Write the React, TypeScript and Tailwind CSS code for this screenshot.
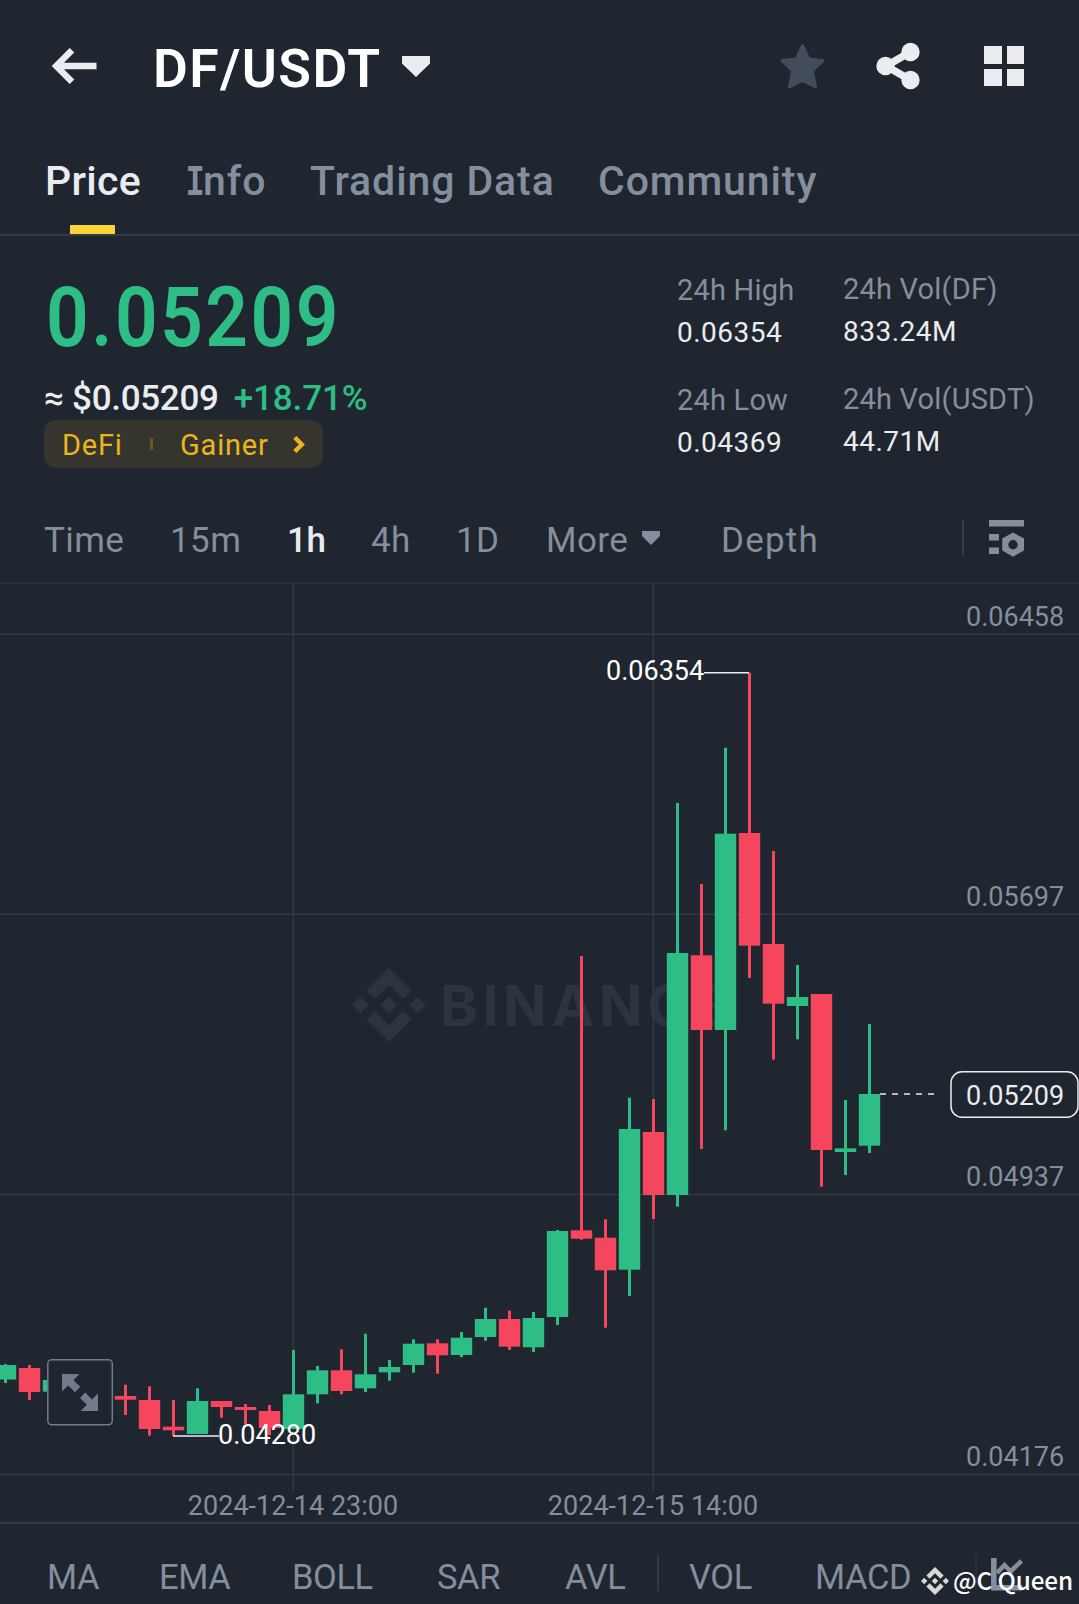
import clsx from "clsx";

const UP = "#2ebd85";
const DOWN = "#f6465d";

const tabs = [
  { label: "Price", width: "w-[142px]", active: true },
  { label: "Info", width: "w-[123px]" },
  { label: "Trading Data", width: "w-[288px]" },
  { label: "Community", width: "w-[230px]" },
];

const stats = [
  [
    { label: "24h High", value: "0.06354" },
    { label: "24h Low", value: "0.04369" },
  ],
  [
    { label: "24h Vol(DF)", value: "833.24M" },
    { label: "24h Vol(USDT)", value: "44.71M" },
  ],
];

const intervals = [
  { label: "Time", width: "w-[126px]" },
  { label: "15m", width: "w-[117px]" },
  { label: "1h", width: "w-[84px]", active: true },
  { label: "4h", width: "w-[85px]" },
  { label: "1D", width: "w-[90px]" },
];

const mainIndicators = [
  { label: "MA", width: "w-[112px]" },
  { label: "EMA", width: "w-[133px]" },
  { label: "BOLL", width: "w-[145px]" },
  { label: "SAR", width: "w-[128px]" },
  { label: "AVL", width: "w-[91px]" },
];

// [slot, up, high, bodyTop, bodyBottom, low]
type Candle = [number, boolean, number, number, number, number];

const candles: Candle[] = [
  [-12, true, 1364, 1365, 1379.5, 1383],
  [-11, false, 1365, 1368, 1392, 1400],
  [-10, true, 1380, 1380, 1391.7, 1391.7],
  [-7, false, 1384.7, 1396, 1399.7, 1415],
  [-6, false, 1386.3, 1400, 1429, 1435.7],
  [-5, false, 1400, 1426.7, 1430.3, 1436],
  [-4, true, 1388.3, 1401, 1434, 1434],
  [-3, false, 1401, 1401, 1407, 1417.7],
  [-2, false, 1404, 1407, 1410, 1424],
  [-1, false, 1405, 1411, 1428, 1435],
  [0, true, 1350, 1394.3, 1429, 1429],
  [1, true, 1366, 1370.3, 1394.3, 1403.3],
  [2, false, 1349.3, 1370.3, 1391, 1394.3],
  [3, true, 1333.7, 1374.3, 1388.3, 1392],
  [4, true, 1360, 1367, 1372.3, 1380.7],
  [5, true, 1339.3, 1343.7, 1365, 1372.7],
  [6, false, 1339.3, 1343.3, 1355.3, 1373.7],
  [7, true, 1332, 1337.7, 1355, 1357.3],
  [8, true, 1307.7, 1319, 1337, 1340.7],
  [9, false, 1310.7, 1319, 1346.7, 1350],
  [10, true, 1312, 1318, 1347.3, 1352],
  [11, true, 1230, 1231, 1317, 1325],
  [12, false, 956, 1230.3, 1238.7, 1239.7],
  [13, false, 1219.3, 1237.7, 1270.3, 1327.7],
  [14, true, 1097.7, 1129, 1269.7, 1296],
  [15, false, 1099, 1132, 1195, 1219],
  [16, true, 803, 953, 1195, 1206.7],
  [17, false, 884, 955.3, 1030, 1149],
  [18, true, 747.7, 833.7, 1030, 1130.3],
  [19, false, 672.7, 833, 945.7, 978],
  [20, false, 851, 944, 1003.7, 1059.7],
  [21, true, 965, 997, 1006, 1039.3],
  [22, false, 994, 994, 1150, 1186.7],
  [23, true, 1100, 1148.3, 1152, 1175],
  [24, true, 1024, 1094, 1145.7, 1153],
];

const levels = [
  { y: 634.3, label: "0.06458" },
  { y: 914.3, label: "0.05697" },
  { y: 1194.5, label: "0.04937" },
  { y: 1474.5, label: "0.04176" },
];

const slotX = (slot: number) => 293.5 + slot * 24;

const BinanceMark = ({ className }: { className?: string }) => (
  <svg viewBox="0 0 126.6 126.6" className={className} fill="currentColor">
    <path d="M38.7 53.2 63.3 28.6l24.6 24.6 14.3-14.3L63.3 0 24.4 38.9zM0 63.3 14.3 49l14.3 14.3-14.3 14.3zM38.7 73.4 63.3 98l24.6-24.6 14.3 14.3-38.9 38.9-38.9-38.9zM98 63.3 112.3 49l14.3 14.3-14.3 14.3zM77.8 63.3 63.3 48.8 48.8 63.3l14.5 14.5z" />
  </svg>
);

const Caret = ({ className }: { className?: string }) => (
  <svg viewBox="0 0 28 21" preserveAspectRatio="none" className={className} fill="currentColor">
    <path d="M0 0h28v7.5L14 21 0 7.5z" />
  </svg>
);

const Header = () => (
  <header className="flex h-[132px] items-center pl-[51px] pr-[55px] text-[#eaecef]">
    <svg viewBox="0 0 46 36" className="h-9 w-[46px]" fill="none" stroke="currentColor" strokeWidth="6.4">
      <path d="M45.500 18H6M21 2.200 5.200 18 21 33.800" />
    </svg>
    <h1 className="ml-14 mt-[5px] w-[230px] whitespace-nowrap text-[53.5px] font-semibold leading-none tracking-[1.4px] text-white">
      DF/USDT
    </h1>
    <Caret className="ml-[19px] h-[21px] w-7" />
    <div className="ml-auto flex items-center">
      <svg viewBox="0 0 45 46" className="h-[46px] w-[45px] text-[#434c5a]" fill="currentColor" stroke="currentColor" strokeWidth="3" strokeLinejoin="round">
        <path d="m22.500 2.500 6.200 13.500 14.300 1.600-10.600 10.200 3.100 16L22.500 37.500 9.500 43.800l3.100-16L2 17.600 16.300 16z" />
      </svg>
      <svg viewBox="0 0 44 48" className="ml-[51px] h-12 w-11" fill="currentColor">
        <path d="M10 24 34.500 10M10 24l24.500 14" stroke="currentColor" strokeWidth="7.500" />
        <circle cx="9.500" cy="24" r="9.200" />
        <circle cx="34.500" cy="10" r="9.200" />
        <circle cx="34.500" cy="38" r="9.200" />
      </svg>
      <div className="ml-16 grid h-10 w-10 grid-cols-2 gap-[5px]">
        <span className="bg-current" />
        <span className="bg-current" />
        <span className="bg-current" />
        <span className="bg-current" />
      </div>
    </div>
  </header>
);

const Tabs = () => (
  <nav className="flex h-[104px] border-b-2 border-[#333b47] pl-[45px] pt-[25px] text-[41px] font-medium leading-[48px] tracking-[0.9px] text-[#848e9c]">
    {tabs.map((tab) => (
      <div key={tab.label} className={clsx("shrink-0 whitespace-nowrap", tab.width)}>
        <span className={clsx("inline-flex flex-col items-center", tab.active && "tracking-[0.3px] text-[#eaecef]")}>
          {tab.label === "Info" ? (
            <span>
              <span className="-ml-[5px] -mr-[5px] inline-block scale-x-[0.72] font-['Liberation_Mono'] text-[43.500px] font-bold tracking-normal">I</span>nfo
            </span>
          ) : (
            tab.label
          )}
          {tab.active && <span className="mt-5 h-[9px] w-[45px] bg-[#fcd535]" />}
        </span>
      </div>
    ))}
  </nav>
);

const Summary = () => (
  <section className="flex h-[260px] pl-[44px]">
    <div className="w-[633px]">
      <div className="ml-[2px] mt-[35px] w-[320px] origin-left scale-x-90 whitespace-nowrap text-[83px] font-semibold leading-[94px] tracking-[2.800px] text-[#2ebd85]">
        0.05209
      </div>
      <div className="mt-[13px] flex h-[42px] items-center gap-[15px] whitespace-nowrap text-[35px] font-medium tracking-[-0.3px]">
        <span className="text-[#eaecef]">≈ $0.05209</span>
        <span className="tracking-[-0.1px] text-[#2ebd85]">+18.71%</span>
      </div>
      <div className="flex h-12 w-[279px] items-center rounded-[12px] bg-[#36352d] pl-[18px] text-[29px] tracking-[0.8px] text-[#eab521]">
        <span className="mt-[3px] w-[88px]">DeFi</span>
        <span className="h-3 w-[3px] bg-[#6b5624]" />
        <span className="ml-[27px] mt-[3px] w-[113px]">Gainer</span>
        <svg viewBox="0 0 12 17" className="h-[17px] w-3" fill="none" stroke="currentColor" strokeWidth="4.400">
          <path d="m1.800 1.500 7 7-7 7" />
        </svg>
      </div>
    </div>
    {stats.map((column, index) => (
      <div key={index} className={clsx("whitespace-nowrap", index === 0 ? "w-[166px] pt-[36px]" : "pt-[35px]")}>
        {column.map((item) => (
          <div key={item.label} className="h-[110px]">
            <div className="text-[29px] leading-[36px] tracking-[0.2px] text-[#848e9c]">{item.label}</div>
            <div className="mt-2 text-[28px] leading-[34px] tracking-[0.5px] text-[#eaecef]">{item.value}</div>
          </div>
        ))}
      </div>
    ))}
  </section>
);

const Intervals = () => (
  <section className="flex h-[88px] items-center border-b-2 border-[#29303b] pl-[44px] pt-[2px] text-[35px] leading-none tracking-[0.4px] text-[#848e9c]">
    {intervals.map((item) => (
      <span key={item.label} className={clsx("shrink-0", item.width, item.active && "font-medium tracking-[-0.4px] text-[#eaecef]")}>
        {item.label}
      </span>
    ))}
    <span className="w-[96px]">More</span>
    <Caret className="-mt-[4px] h-[14px] w-[18px]" />
    <span className="ml-[61px] tracking-[1.2px]">Depth</span>
    <span className="-mt-[4px] ml-auto h-9 w-[2px] bg-[#333b47]" />
    <svg viewBox="0 0 36 37" className="-mt-[3px] ml-[25px] mr-[54px] h-[37px] w-9" fill="currentColor">
      <path d="M0 0h35v6.500H0zM0 14h10v6.500H0zM0 27.500h10V34H0z" />
      <path fillRule="evenodd" d="M24 12.500 35 18.500v12L24 36.700 13.200 30.500v-12zM24 20a4.700 4.700 0 1 0 0 9.400 4.700 4.700 0 0 0 0-9.400z" />
    </svg>
  </section>
);

const Chart = () => (
  <section className="relative h-[940px] border-b-2 border-[#333b47]">
    <div className="absolute left-[352px] top-[384px] flex items-center text-[#2e343f]">
      <BinanceMark className="size-[74px]" />
      <span className="ml-[14px] font-['Inter'] text-[57px] font-bold leading-none tracking-[4.8px]">BINANCE</span>
    </div>
    <svg viewBox="0 584 1079 938" className="absolute inset-0 h-[938px] w-full font-['Roboto'] text-[27px]">
      <g stroke="#323a46" strokeWidth="1.500">
        {levels.map((level) => (
          <line key={level.label} x1="0" x2="1079" y1={level.y} y2={level.y} />
        ))}
        <line x1="293.400" x2="293.400" y1="584" y2="1491" />
        <line x1="653.400" x2="653.400" y1="584" y2="1491" />
      </g>
      {candles.map(([slot, up, high, top, bottom, low]) => (
        <g key={slot} fill={up ? UP : DOWN}>
          <rect x={slotX(slot) - 1.5} y={high} width="3" height={low - high} />
          <rect x={slotX(slot) - 10.7} y={top} width="21.400" height={bottom - top} />
        </g>
      ))}
      <g fill="#848e9c">
        {levels.map((level) => (
          <text key={level.label} x="966" y={level.y - 8.7}>
            {level.label}
          </text>
        ))}
        <text x="293" y="1514.500" textAnchor="middle">2024-12-14 23:00</text>
        <text x="653" y="1514.500" textAnchor="middle">2024-12-15 14:00</text>
      </g>
      <g fill="#ffffff">
        <text x="606" y="679.500">0.06354</text>
        <text x="218" y="1444">0.04280</text>
      </g>
      <path d="M704 672.700h45M173 1436h46" stroke="#eaecef" strokeWidth="1.600" />
      <path d="M880 1094h55" stroke="#eaecef" strokeWidth="1.600" strokeDasharray="6 6" />
      <rect x="951" y="1071.700" width="127" height="45.500" rx="11" fill="#1f262f" stroke="#eaecef" strokeWidth="1.500" />
      <text x="966" y="1104.500" fill="#eaecef">0.05209</text>
      <rect x="47.800" y="1359.800" width="64.500" height="65" rx="4" fill="#1f262f" stroke="#727b8c" strokeWidth="1.500" />
      <g fill="#727b8c">
        <path d="M62 1374h17.500l-6 6.200 6.700 6.600-5.200 5.400-6.700-6.800-6.300 6.100z" />
        <path d="M98 1411H80.700l6.100-6.200-6.700-6.800 5.200-5.400 6.700 6.800 6-6.100z" />
      </g>
    </svg>
  </section>
);

const Indicators = () => (
  <footer className="relative flex h-20 items-start pl-[47px] pt-[35px] text-[34.500px] leading-[36px] tracking-[-0.4px] text-[#848e9c]">
    {mainIndicators.map((item) => (
      <span key={item.label} className={clsx("shrink-0", item.width)}>
        {item.label}
      </span>
    ))}
    <span className="-mt-[4px] ml-px h-9 w-[2px] bg-[#333b47]" />
    <span className="ml-[30px] w-[126px] shrink-0">VOL</span>
    <span className="w-[160px] shrink-0">MACD</span>
    <span className="-mt-[5px] h-9 w-[2px] bg-[#29303b]" />
    <svg viewBox="0 0 32 33" className="-mt-[1px] ml-[14px] h-[33px] w-8 shrink-0" fill="none" stroke="currentColor" strokeWidth="5.500">
      <path d="M2.800 0v29.800h28.500" />
      <path d="m6 15 7.500-8 6 6.500L30.500 3" strokeWidth="4.500" />
    </svg>
    <div className="absolute left-[921px] top-[42px] flex items-center font-['Noto_Sans_CJK_SC'] text-[24.300px] font-medium leading-[30px] tracking-normal text-white">
      <BinanceMark className="size-7 text-[#d8d8d8]" />
      <span className="-mt-px ml-1 whitespace-nowrap tracking-[-0.1px]">@C Queen</span>
    </div>
  </footer>
);

export default function App() {
  return (
    <div className="flex h-[1604px] w-[1079px] flex-col overflow-hidden bg-[#1f262f] font-['Roboto',sans-serif]">
      <Header />
      <Tabs />
      <Summary />
      <Intervals />
      <Chart />
      <Indicators />
    </div>
  );
}
